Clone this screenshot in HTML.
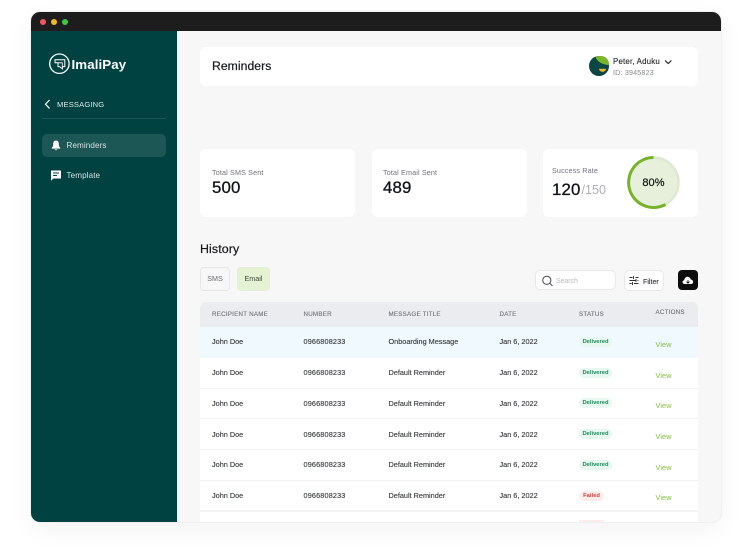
<!DOCTYPE html>
<html><head><meta charset="utf-8">
<style>
html,body{margin:0;padding:0;background:#fff}
body{width:752px;height:553px;position:relative;overflow:hidden;font-family:"Liberation Sans",sans-serif}
div,span{position:absolute;white-space:nowrap}
svg{position:absolute;left:0;top:0}
#win{left:31px;top:12px;width:690px;height:510px;border-radius:9px;overflow:hidden;background:#f7f7f7;box-shadow:0 0 0 1px #f0f0f0,0 8px 26px rgba(0,0,0,.05)}
.t{line-height:12px}
.card{background:#fff;border-radius:6px}
.th{font-size:6.2px;color:#6b6f76;line-height:10px;letter-spacing:.25px;-webkit-text-stroke:.1px #6b6f76}
.td{font-size:7.3px;color:#33363a;line-height:10px;letter-spacing:0;-webkit-text-stroke:.12px #33363a}
.u{letter-spacing:.14px}
.v{font-size:7.3px;color:#84bd3c;line-height:10px;letter-spacing:.1px;left:655.5px}
.b{height:10px;border-radius:5px;font-size:5.8px;line-height:10px;text-align:center;left:579px}
.ok{width:33px;background:#e6f8ef;color:#1f8a5b;font-weight:bold}
.no{width:25px;background:#fdeceb;color:#c9413a;font-weight:bold}
.l{left:200px;width:498px;height:1px;background:#f3f3f3}
.n{font-size:16.8px;line-height:19px;color:#0f1217;letter-spacing:.15px;-webkit-text-stroke:.3px #0f1217}
</style></head><body>
<div id="win"></div>
<div style="left:31px;top:12px;width:690px;height:19px;background:#1d1d1d;border-radius:9px 9px 0 0"></div>
<div style="left:40px;top:19px;width:6px;height:6px;border-radius:50%;background:#f0565a"></div>
<div style="left:51px;top:19px;width:6px;height:6px;border-radius:50%;background:#f3b925"></div>
<div style="left:62px;top:19px;width:6px;height:6px;border-radius:50%;background:#45c53f"></div>
<div style="left:31px;top:31px;width:146px;height:491px;background:#004241;border-radius:0 0 0 9px"></div>
<div style="left:42px;top:118px;width:124px;height:1px;background:#1b5554"></div>
<div style="left:42px;top:134px;width:124px;height:23px;background:#1c5755;border-radius:5px"></div>

<div class="t" style="left:71.5px;top:57px;font-size:13.3px;line-height:15px;font-weight:bold;color:#fff;letter-spacing:.1px">ImaliPay</div>
<div class="t" style="left:57px;top:98.5px;font-size:7.6px;color:#dfe9e8;letter-spacing:.15px">MESSAGING</div>
<div class="t" style="left:66.5px;top:140px;font-size:8.1px;color:#d4e2e1;letter-spacing:.1px">Reminders</div>
<div class="t" style="left:66.5px;top:170px;font-size:8.1px;color:#d4e2e1;letter-spacing:.1px">Template</div>

<div class="card" style="left:200px;top:47px;width:498px;height:39px"></div>
<div style="left:212px;top:59px;font-size:12.2px;line-height:15px;color:#15181c;letter-spacing:.05px;-webkit-text-stroke:.2px #15181c">Reminders</div>
<div class="t" style="left:613px;top:56px;font-size:7.9px;color:#24272b;letter-spacing:.18px;-webkit-text-stroke:.12px #24272b">Peter, Aduku</div>
<div class="t" style="left:613px;top:66.5px;font-size:7.1px;color:#85888d;letter-spacing:.2px">ID: 3945823</div>

<div class="card" style="left:200px;top:149px;width:155px;height:68px"></div>
<div class="card" style="left:371.5px;top:149px;width:155px;height:68px"></div>
<div class="card" style="left:543px;top:149px;width:155px;height:68px"></div>
<div class="t" style="left:212px;top:166.5px;font-size:7.2px;color:#707378;letter-spacing:.14px">Total SMS Sent</div>
<div class="n" style="left:212px;top:178px">500</div>
<div class="t" style="left:383px;top:166.5px;font-size:7.2px;color:#707378;letter-spacing:.14px">Total Email Sent</div>
<div class="n" style="left:383px;top:178px">489</div>
<div class="t" style="left:552px;top:164.5px;font-size:7.2px;color:#6f7380;letter-spacing:.14px">Success Rate</div>
<div class="n" style="left:552px;top:180px">120</div>
<div style="left:581.5px;top:181px;font-size:12.6px;line-height:18px;color:#aeb0b3">/150</div>

<svg width="752" height="553" viewBox="0 0 752 553">
<circle cx="59.4" cy="63.7" r="9.7" fill="none" stroke="#fff" stroke-width="1.3"/>
<path d="M55 59.800h9.800v6.800h-2.300v2.300l-3-2.300h-1.500v-3.800h-3z" fill="none" stroke="#fff" stroke-width="1"/>
<path d="M58 62.800h4.300v3.800" fill="none" stroke="#fff" stroke-width=".8"/>
<path d="M49.500 100l-4 4.200 4 4.200" fill="none" stroke="#fff" stroke-width="1.2"/>
<path d="M56 140.500c-2 0-2.800 1.500-2.800 3.500 0 2-.5 3-1.400 3.800v.8h8.400v-.8c-.9-.8-1.400-1.800-1.400-3.800 0-2-.8-3.500-2.800-3.500zM54.600 149.300h2.800l-1.400 1.200z" fill="#fff"/>
<path d="M51 170.500h10v8h-7.500l-2.500 2.200z" fill="#fff"/>
<path d="M53 173h6M53 175.500h4" stroke="#004241" stroke-width="1"/>
<circle cx="599" cy="66" r="10" fill="#0a4643"/>
<path d="M595.500 56.600c1 4.500 6 8 13.300 8.400 1-5-3.500-9.300-8.300-9-1.700 0-3.700 0-5 .6z" fill="#7ab52d"/>
<path d="M599 68.700h7c-.3 2-1.700 3-3.500 3s-3.200-1-3.500-3z" fill="#f4b51e"/>
<path d="M665 60.500l3.200 3 3.200-3" fill="none" stroke="#17191c" stroke-width="1.100"/>
<circle cx="653.5" cy="182.500" r="25" fill="#e7f0db" stroke="#dfe8d2" stroke-width="2.500"/>
<path d="M653.500 157.500A25 25 0 1 0 665.500 204.500" fill="none" stroke="#77b32a" stroke-width="3"/>
</svg>
<div style="left:633.5px;top:175.5px;width:40px;text-align:center;font-size:11px;line-height:14px;color:#0f1217;letter-spacing:.1px;-webkit-text-stroke:.2px #0f1217">80%</div>

<div style="left:200px;top:241px;font-size:12.4px;line-height:16px;color:#14171b;letter-spacing:.1px;-webkit-text-stroke:.2px #14171b">History</div>
<div style="left:200px;top:267px;width:28px;height:22px;border:1px solid #e6e6e6;border-radius:4px;background:#f7f7f7;text-align:center;line-height:22px;font-size:7.2px;color:#696c70">SMS</div>
<div style="left:237px;top:267px;width:31px;height:22px;border:1px solid #e3eed5;border-radius:4px;background:#e5f2d3;text-align:center;line-height:22px;font-size:7.2px;color:#3f4a3a">Email</div>

<div style="left:535px;top:270px;width:79px;height:18px;border:1px solid #e9e9e9;border-radius:5px;background:#fff"></div>
<div class="t" style="left:556px;top:275.5px;font-size:6.9px;color:#b9bbbe">Search</div>
<div style="left:624px;top:270px;width:38px;height:19px;border:1px solid #e9e9e9;border-radius:5px;background:#fff"></div>
<div class="t" style="left:643px;top:275.5px;font-size:7.1px;color:#33363a;-webkit-text-stroke:.12px #33363a">Filter</div>
<div style="left:678px;top:270px;width:20px;height:20px;background:#0d0d0d;border-radius:4px"></div>
<svg width="752" height="553" viewBox="0 0 752 553">
<circle cx="546.800" cy="280.300" r="4.100" fill="none" stroke="#44474b" stroke-width="1"/>
<path d="M549.800 283.300l2.700 2.700" stroke="#44474b" stroke-width="1"/>
<path d="M629.500 277.500h3M635.500 277.500h3M629.500 280.500h6M637.500 280.500h1M629.500 283.500h2M634 283.500h4.500M633.500 276v3M636 279v3M632.500 282v3" stroke="#2a2d31" stroke-width=".9" fill="none"/>
<path d="M684.500 284c-2.300 0-2.800-3.300-.3-3.700.3-2.600 2.300-3.900 4-3.400 1.300.2 2.300 1.400 2.600 2.600 2.800 0 3.300 4.500.4 4.500z" fill="#fff"/>
<path d="M688 280v3M686.500 281.700l1.500 1.500 1.500-1.500" stroke="#0d0d0d" stroke-width=".8" fill="none"/>
</svg>

<div style="left:200px;top:302px;width:498px;height:25px;background:#ebecef;border-radius:6px 6px 0 0"></div>
<div class="th" style="left:212px;top:309.5px">RECIPIENT NAME</div>
<div class="th" style="left:303.5px;top:309.5px">NUMBER</div>
<div class="th" style="left:388.5px;top:309.5px">MESSAGE TITLE</div>
<div class="th" style="left:499.5px;top:309.5px">DATE</div>
<div class="th" style="left:579px;top:309.5px">STATUS</div>
<div class="th" style="left:655.5px;top:308px">ACTIONS</div>

<div style="left:200px;top:327px;width:498px;height:195px;background:#fff"></div>
<div style="left:200px;top:327px;width:498px;height:31px;background:#f0f9fd"></div>
<div class="l" style="top:388px"></div>
<div class="l" style="top:418px"></div>
<div class="l" style="top:449px"></div>
<div class="l" style="top:480px"></div>
<div class="l" style="top:510px;height:2px"></div>

<div class="td" style="left:212px;top:337px">John Doe</div><div class="td u" style="left:303.5px;top:337px">0966808233</div><div class="td" style="left:388.5px;top:337px">Onboarding Message</div><div class="td" style="left:499.5px;top:337px">Jan 6, 2022</div><div class="b ok" style="top:336.5px">Delivered</div><div class="v" style="top:339.5px">View</div>
<div class="td" style="left:212px;top:368px">John Doe</div><div class="td u" style="left:303.5px;top:368px">0966808233</div><div class="td" style="left:388.5px;top:368px">Default Reminder</div><div class="td" style="left:499.5px;top:368px">Jan 6, 2022</div><div class="b ok" style="top:367.5px">Delivered</div><div class="v" style="top:370.5px">View</div>
<div class="td" style="left:212px;top:398.5px">John Doe</div><div class="td u" style="left:303.5px;top:398.5px">0966808233</div><div class="td" style="left:388.5px;top:398.5px">Default Reminder</div><div class="td" style="left:499.5px;top:398.5px">Jan 6, 2022</div><div class="b ok" style="top:398px">Delivered</div><div class="v" style="top:401px">View</div>
<div class="td" style="left:212px;top:429.5px">John Doe</div><div class="td u" style="left:303.5px;top:429.5px">0966808233</div><div class="td" style="left:388.5px;top:429.5px">Default Reminder</div><div class="td" style="left:499.5px;top:429.5px">Jan 6, 2022</div><div class="b ok" style="top:429px">Delivered</div><div class="v" style="top:432px">View</div>
<div class="td" style="left:212px;top:460px">John Doe</div><div class="td u" style="left:303.5px;top:460px">0966808233</div><div class="td" style="left:388.5px;top:460px">Default Reminder</div><div class="td" style="left:499.5px;top:460px">Jan 6, 2022</div><div class="b ok" style="top:459.5px">Delivered</div><div class="v" style="top:462.5px">View</div>
<div class="td" style="left:212px;top:491px">John Doe</div><div class="td u" style="left:303.5px;top:491px">0966808233</div><div class="td" style="left:388.5px;top:491px">Default Reminder</div><div class="td" style="left:499.5px;top:491px">Jan 6, 2022</div><div class="b no" style="top:490.5px">Failed</div><div class="v" style="top:493px">View</div>
<div style="left:579px;top:520px;width:25px;height:2px;background:#fdeceb"></div>
</body></html>
